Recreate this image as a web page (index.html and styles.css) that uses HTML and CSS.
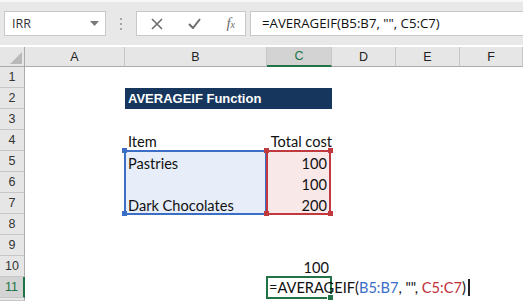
FILE: index.html
```html
<!DOCTYPE html>
<html lang="en">
<head>
    <meta charset="UTF-8">
    <title>AVERAGEIF Function</title>
    <link rel="stylesheet" href="styles.css">
</head>
<body>
    <div class="ribbon">
        <div class="namebox">
            <span>IRR</span>
            <svg class="caret" width="9" height="5" viewBox="0 0 9 5"><path d="M0 0h9L4.5 5z" fill="#7a7a7a"/></svg>
        </div>
        <div class="grip"><i></i><i></i><i></i></div>
        <div class="fxbox">
            <svg width="12" height="12" viewBox="0 0 12 12"><path d="M1 1l10 10M11 1L1 11" stroke="#6d6d6d" stroke-width="1.6"/></svg>
            <svg width="13" height="11" viewBox="0 0 13 11"><path d="M1 6l4 4 7-9" stroke="#6d6d6d" stroke-width="2" fill="none"/></svg>
            <span class="fx">f<sub>x</sub></span>
        </div>
        <div class="formula">=AVERAGEIF(B5:B7, "", C5:C7)</div>
    </div>

    <div class="sheet">
        <div class="corner"><span></span></div>
        <div class="colhead">A</div>
        <div class="colhead">B</div>
        <div class="colhead sel">C</div>
        <div class="colhead">D</div>
        <div class="colhead">E</div>
        <div class="colhead">F</div>

        <div class="rowheads">
            <div>1</div><div>2</div><div>3</div><div>4</div><div>5</div><div>6</div>
            <div>7</div><div>8</div><div>9</div><div>10</div><div class="sel">11</div><div class="cut"></div>
        </div>

        <div class="title">AVERAGEIF Function</div>
        <div class="cell item">Item</div>
        <div class="cell cost num">Total cost</div>

        <div class="range range-b">
            <div class="cell">Pastries</div>
            <div class="cell"></div>
            <div class="cell">Dark Chocolates</div>
        </div>
        <div class="range range-c">
            <div class="cell num">100</div>
            <div class="cell num">100</div>
            <div class="cell num">200</div>
        </div>

        <div class="cell result num">100</div>
        <div class="active">
            <span class="edit">=AVERAGEIF(<b class="ref-b">B5:B7</b>, "", <b class="ref-c">C5:C7</b>)<i class="cursor"></i></span>
            <span class="fill"></span>
        </div>
    </div>
</body>
</html>
```

FILE: styles.css
```css
body {
    margin: 0;
    width: 523px;
    height: 301px;
    overflow: hidden;
    background: #fff;
    font-family: "Liberation Sans", Arial, sans-serif;
}

/* barra de fórmulas */
.ribbon {
    height: 45px;
    border-top: 2px solid #f7f7f7;
    background: #e8e8e8;
    display: flex;
    align-items: center;
    padding-left: 4px;
    box-sizing: border-box;
}

.namebox {
    width: 102px;
    height: 25px;
    box-sizing: border-box;
    background: #fff;
    border: 1px solid #c8c8c8;
    display: flex;
    align-items: center;
    justify-content: space-between;
    padding: 0 6px 0 7px;
    font-family: "Open Sans", sans-serif;
    font-size: 12.5px;
    color: #333;
}

.grip {
    width: 30px;
    display: flex;
    flex-direction: column;
    align-items: center;
    gap: 3px;
}

.grip i {
    width: 2px;
    height: 2px;
    background: #a8a8a8;
}

.fxbox {
    width: 110px;
    height: 25px;
    box-sizing: border-box;
    background: #fff;
    border: 1px solid #c8c8c8;
    display: flex;
    align-items: center;
    justify-content: space-between;
    padding: 0 10px 0 14px;
}

.fx {
    font-family: "Liberation Serif", serif;
    font-style: italic;
    font-size: 15px;
    color: #6d6d6d;
    line-height: 1;
}

.fx sub {
    font-size: 10px;
    vertical-align: 0;
}

.formula {
    flex: 1;
    height: 25px;
    margin-left: 4px;
    box-sizing: border-box;
    background: #fff;
    border: 1px solid #c8c8c8;
    border-right: none;
    padding-left: 11px;
    line-height: 23px;
    font-family: "Open Sans", sans-serif;
    font-size: 13.2px;
    color: #111;
    white-space: nowrap;
}

/* hoja */
.sheet {
    margin-top: 2px;
    display: grid;
    grid-template-columns: 25px 100px 142px 65px 64px 64px 63px;
    grid-template-rows: 20px repeat(11, 21px) 3px;
    font-family: Lato, sans-serif;
    font-size: 14.6px;
    color: #111;
}

.corner {
    background: #e6e6e6;
    border-right: 1px solid #ababab;
    border-bottom: 1px solid #ababab;
    position: relative;
}

.corner span {
    position: absolute;
    right: 2px;
    bottom: 2px;
    border-left: 12px solid transparent;
    border-bottom: 12px solid #b9b9b9;
}

.colhead {
    background: #e6e6e6;
    border-right: 1px solid #c6c6c6;
    border-bottom: 1px solid #ababab;
    text-align: center;
    font-family: "Liberation Sans", sans-serif;
    font-size: 12.5px;
    line-height: 20px;
    color: #222;
}

.colhead.sel {
    background: #d3d3d3;
    border-bottom: 2px solid #217346;
    color: #217346;
    line-height: 19px;
}

.rowheads {
    grid-column: 1;
    grid-row: 2 / span 12;
    display: flex;
    flex-direction: column;
}

.rowheads div {
    height: 21px;
    flex-shrink: 0;
    box-sizing: border-box;
    background: #e6e6e6;
    border-bottom: 1px solid #c6c6c6;
    border-right: 1px solid #ababab;
    text-align: center;
    font-family: "Liberation Sans", sans-serif;
    font-size: 12.5px;
    line-height: 21px;
    color: #333;
}

.rowheads div.sel {
    background: #d3d3d3;
    border-right: 2px solid #217346;
    color: #217346;
}

.rowheads div.cut {
    height: 3px;
}

.cell {
    height: 21px;
    padding: 0 3px;
    line-height: 24px;
    white-space: nowrap;
}

.num {
    text-align: right;
}

.title {
    grid-column: 3 / span 2;
    grid-row: 3;
    background: #17365d;
    color: #fff;
    font-family: "Liberation Sans", sans-serif;
    font-weight: bold;
    font-size: 13px;
    line-height: 22px;
    padding-left: 3px;
}

.item {
    grid-column: 3;
    grid-row: 5;
}

.cost {
    grid-column: 4;
    grid-row: 5;
    padding-right: 0;
    overflow: visible;
}

.range {
    grid-row: 6 / span 3;
    position: relative;
    box-sizing: border-box;
    margin-top: -1px;
    margin-bottom: -1px;
}

.range-b {
    grid-column: 3;
    margin-left: -1px;
    background: #e7eef9;
    border: 2px solid #3b6fc6;
}

.range-c {
    grid-column: 4;
    margin-left: -1px;
    margin-right: 1px;
    background: #f9e8e8;
    border: 2px solid #c0393f;
}

.range .cell {
    padding: 0 2px;
    height: 21px;
}

.range::before,
.range::after {
    content: "";
    position: absolute;
    width: 5px;
    height: 5px;
    top: -4px;
    left: -4px;
    box-shadow: 0 63px 0 currentColor;
}

.range::after {
    left: auto;
    right: -4px;
}

.range-b::before,
.range-b::after {
    background: #3b6fc6;
    box-shadow: 0 63px 0 #3b6fc6;
}

.range-c::before,
.range-c::after {
    background: #c0393f;
    box-shadow: 0 63px 0 #c0393f;
}

.result {
    grid-column: 4;
    grid-row: 11;
    padding-right: 3px;
}

.active {
    grid-column: 4;
    grid-row: 12;
    position: relative;
    margin: -1px 0 -1px -1px;
    border: 2px solid #217346;
}

.edit {
    display: block;
    padding-left: 1px;
    line-height: 20px;
    white-space: nowrap;
    color: #111;
}

.ref-b {
    font-weight: normal;
    color: #3a6dc5;
}

.ref-c {
    font-weight: normal;
    color: #c0303b;
}

.cursor {
    display: inline-block;
    width: 2px;
    height: 17px;
    margin-left: 2px;
    vertical-align: -3px;
    background: #222;
}

.fill {
    position: absolute;
    right: -4px;
    bottom: -4px;
    width: 5px;
    height: 5px;
    background: #217346;
    border: 1px solid #fff;
}
```
